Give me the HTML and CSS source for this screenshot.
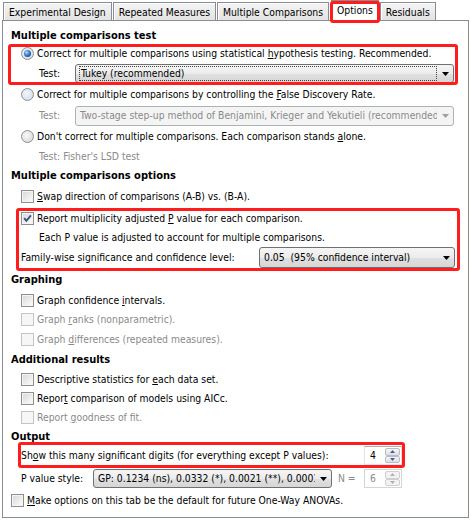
FILE: index.html
```html
<!DOCTYPE html>
<html>
<head>
<meta charset="utf-8">
<title>Options</title>
<link rel="stylesheet" href="styles.css">
</head>
<body>
<div class="dlg">
  <div class="tabs">
    <div class="tab">Experimental Design</div>
    <div class="tab">Repeated Measures</div>
    <div class="tab">Multiple Comparisons</div>
    <div class="tab sel">Options</div>
    <div class="tab">Residuals</div>
  </div>
  <div class="panel">
    <div class="h h18">Multiple comparisons test</div>
    <div class="hl hl1">
      <div class="row h19 ind"><span class="radio on"></span><span>Correct for multiple comparisons using statistical <u>h</u>ypothesis testing. Recommended.</span></div>
      <div class="row h21 sub">
        <span class="lbl">Test:</span>
        <div class="combo wide"><span class="focusrect">Tukey (recommended)</span><svg class="arr" width="7" height="4" viewBox="0 0 7 4"><polygon points="0,0 7,0 3.5,4"/></svg></div>
      </div>
    </div>
    <div class="row h21 ind"><span class="radio"></span><span>Correct for multiple comparisons by controlling the <u>F</u>alse Discovery Rate.</span></div>
    <div class="row h21 sub">
      <span class="lbl dim">Test:</span>
      <div class="combo wide dis"><span class="val">Two-stage step-up method of Benjamini, Krieger and Yekutieli (recommended)</span><svg class="arr" width="7" height="4" viewBox="0 0 7 4"><polygon points="0,0 7,0 3.5,4"/></svg></div>
    </div>
    <div class="row h21 ind"><span class="radio off"></span><span>Don't correct for multiple comparisons. Each comparison stands <u>a</u>lone.</span></div>
    <div class="row h19 sub dim">Test: Fisher's LSD test</div>

    <div class="h h18">Multiple comparisons options</div>
    <div class="row h24 ind"><span class="cb"></span><span><u>S</u>wap direction of comparisons (A-B) vs. (B-A).</span></div>
    <div class="hl hl2">
      <div class="row h21 ind"><span class="cb on"><svg width="11" height="11" viewBox="0 0 11 11"><path d="M2.2 5.2 L4.4 7.8 L8.9 2.4" fill="none" stroke="#3a4f86" stroke-width="1.9"/></svg></span><span>Report multiplicity adjusted <u>P</u> value for each comparison.</span></div>
      <div class="row h17 sub">Each P value is adjusted to account for multiple comparisons.</div>
      <div class="row h23 ind">
        <span>Family-wise significance and confidence level:</span>
        <div class="combo fam"><span class="val">0.05&nbsp; (95% confidence interval)</span><svg class="arr" width="7" height="4" viewBox="0 0 7 4"><polygon points="0,0 7,0 3.5,4"/></svg></div>
      </div>
    </div>

    <div class="h h21">Graphing</div>
    <div class="row h20 ind"><span class="cb"></span><span>Graph confidence <u>i</u>ntervals.</span></div>
    <div class="row h19 ind dim"><span class="cb dis"></span><span>Graph <u>r</u>anks (nonparametric).</span></div>
    <div class="row h20 ind dim"><span class="cb dis"></span><span>Graph <u>d</u>ifferences (repeated measures).</span></div>

    <div class="h h20">Additional results</div>
    <div class="row h20 ind"><span class="cb"></span><span>Descriptive statistics for <u>e</u>ach data set.</span></div>
    <div class="row h19 ind"><span class="cb"></span><span>Repor<u>t</u> comparison of models using AICc.</span></div>
    <div class="row h19 ind dim"><span class="cb dis"></span><span>Report <u>g</u>oodness of fit.</span></div>

    <div class="h h18">Output</div>
    <div class="hl hl3">
      <div class="row h21 ind">
        <span>Sh<u>o</u>w this many significant digits (for everything except P values):</span>
        <div class="spin"><span class="num">4</span><span class="btns"><span class="sb"><svg width="5" height="3" viewBox="0 0 5 3"><polygon points="0,3 5,3 2.5,0"/></svg></span><span class="sb"><svg width="5" height="3" viewBox="0 0 5 3"><polygon points="0,0 5,0 2.5,3"/></svg></span></span></div>
      </div>
    </div>
    <div class="row h25 ind">
      <span class="plbl">P value style:</span>
      <div class="combo pstyle"><span class="val">GP: 0.1234 (ns), 0.0332 (*), 0.0021 (**), 0.0001 (***)</span><svg class="arr" width="7" height="4" viewBox="0 0 7 4"><polygon points="0,0 7,0 3.5,4"/></svg></div>
      <span class="nlbl dim">N =</span>
      <div class="spin dis"><span class="num">6</span><span class="btns"><span class="sb"><svg width="5" height="3" viewBox="0 0 5 3"><polygon points="0,3 5,3 2.5,0"/></svg></span><span class="sb"><svg width="5" height="3" viewBox="0 0 5 3"><polygon points="0,0 5,0 2.5,3"/></svg></span></span></div>
    </div>
    <div class="row h19"><span class="cb"></span><span><u>M</u>ake options on this tab be the default for future One-Way ANOVAs.</span></div>
  </div>
</div>
</body>
</html>
```

FILE: styles.css
```css
* { box-sizing: border-box; }
html, body { margin: 0; padding: 0; background: #fff; }
body {
  font-family: "DejaVu Sans Condensed", "DejaVu Sans", sans-serif;
  font-stretch: condensed;
  font-size: 10.3px;
  line-height: 13px;
  color: #000;
}
u { text-decoration: underline; text-underline-offset: 1px; }

.dlg { width: 471px; height: 520px; padding-left: 2px; }

/* tabs */
.tabs {
  display: flex;
  align-items: flex-end;
  height: 20px;
  padding-left: 1px;
  position: relative;
  z-index: 2;
}
.tab {
  height: 18px;
  padding: 1px 5px 0 5px;
  margin-right: 1px;
  border: 1px solid #898c95;
  border-bottom: none;
  background: linear-gradient(#f4f4f4, #e3e3e3);
  box-shadow: inset 1px 1px 0 #fff;
  display: flex;
  align-items: center;
  white-space: nowrap;
}
.tab.sel {
  height: 21px;
  margin: 0 1px -1px 1px;
  padding: 0 5px 2px 5px;
  background: #fff;
  box-shadow: none;
  position: relative;
}
.tab.sel::after {
  content: "";
  position: absolute;
  left: -2px; right: -2px; top: 0; bottom: -2px;
  border: 3px solid #ff1c1c;
  border-radius: 3px;
}

/* panel */
.panel {
  width: 467px;
  height: 498px;
  border: 1px solid #898c95;
  padding: 5px 8px 0 8px;
  background: #fff;
  position: relative;
}

.h { font-weight: bold; font-size: 11px; display: flex; align-items: center; color: #000; }
.row { display: flex; align-items: center; white-space: nowrap; }
.ind { padding-left: 10px; }
.sub { padding-left: 28px; }
.dim { color: #8a8a8a; }

.h17 { height: 17px; }
.h18 { height: 18px; }
.h19 { height: 19px; }
.h20 { height: 20px; }
.h21 { height: 21px; }
.h23 { height: 23px; }
.h24 { height: 24px; }
.h25 { height: 25px; }

.lbl { width: 36px; flex: none; }

/* red annotation boxes */
.hl { position: relative; }
.hl::after {
  content: "";
  position: absolute;
  border: 3px solid #ff1c1c;
  border-radius: 3px;
  pointer-events: none;
}
.hl1::after { left: -3px; right: 2px; top: 0; bottom: -1px; }
.hl2::after { left: 5px; right: 0; top: 0; bottom: -2px; }
.hl3::after { left: 7px; right: 55px; top: -3px; bottom: -2px; }

/* radio */
.radio {
  flex: none;
  width: 13px; height: 13px;
  border-radius: 50%;
  border: 1px solid #8e8f8f;
  background: radial-gradient(circle at 40% 40%, #f2f6fa 0%, #dbe5ee 60%, #c6d3df 100%);
  margin-right: 3px;
  display: flex; align-items: center; justify-content: center;
}
.radio.off { background: radial-gradient(circle at 40% 40%, #f8f8f8 0%, #e2e2e2 60%, #cfcfcf 100%); }
.radio.on::after {
  content: "";
  width: 7px; height: 7px;
  border-radius: 50%;
  background: radial-gradient(circle at 38% 35%, #bfe3ff 0%, #4b8fd6 35%, #1b4f95 75%, #143d74 100%);
}

/* checkbox */
.cb {
  flex: none;
  width: 13px; height: 13px;
  border: 1px solid #8e8f8f;
  background: linear-gradient(135deg, #d4d6da 0%, #f2f2f2 70%, #fbfbfb 100%);
  box-shadow: inset 0 0 0 1px #f4f4f4;
  margin-right: 3px;
  display: flex; align-items: center; justify-content: center;
}
.cb svg { display: block; }
.cb.dis {
  border-color: #c4c4c4;
  background: #f6f6f6;
  box-shadow: none;
}

/* combo box */
.combo {
  height: 19px;
  border: 1px solid #707070;
  border-radius: 3px;
  background: linear-gradient(#f5f5f5 0%, #ececec 50%, #e0e0e0 52%, #d6d6d6 100%);
  display: flex;
  align-items: center;
  padding-left: 3px;
  overflow: hidden;
  min-width: 0;
}
.combo .val { flex: 1; min-width: 0; overflow: hidden; white-space: nowrap; padding-left: 1px; }
.combo .arr { flex: none; margin: 0 4px 0 5px; fill: #000; }
.combo.wide { flex: 1; margin-right: 6px; }
.combo.dis {
  height: 20px;
  border-color: #adb2b5;
  background: #f4f4f4;
  color: #8a8a8a;
}
.combo.dis .arr { fill: #a0a0a0; }
.focusrect {
  flex: 1;
  min-width: 0;
  height: 15px;
  border: 1px dotted #444;
  display: flex; align-items: center;
  padding-left: 1px;
}
.combo.fam { width: 196px; flex: none; height: 21px; margin-left: auto; margin-right: 5px; }
.plbl { width: 72px; flex: none; }
.combo.pstyle { width: 239px; flex: none; }
.nlbl { margin-left: 6px; flex: none; }

/* spin box */
.spin {
  flex: none;
  width: 38px; height: 19px;
  margin-left: auto;
  margin-right: 58px;
  border: 1px solid #abadb3;
  border-color: #abadb3 #dbdfe6 #e3e9ef #e2e3ea;
  background: #fff;
  display: flex;
  align-items: center;
  padding: 1px 1px 1px 5px;
}
.spin .num { flex: 1; }
.spin .btns { width: 15px; height: 100%; display: flex; flex-direction: column; }
.spin .sb {
  flex: 1;
  border: 1px solid #b8bcc4;
  border-radius: 2px;
  background: linear-gradient(#f6f6f6, #dedfe2);
  display: flex; align-items: center; justify-content: center;
}
.spin .sb svg { fill: #4a5f95; display: block; }
.spin.dis { border-color: #d5d5d5; color: #8a8a8a; }
.spin.dis .sb { border-color: #d0d0d0; background: #f3f3f3; }
.spin.dis .sb svg { fill: #b2b2b2; }
```
